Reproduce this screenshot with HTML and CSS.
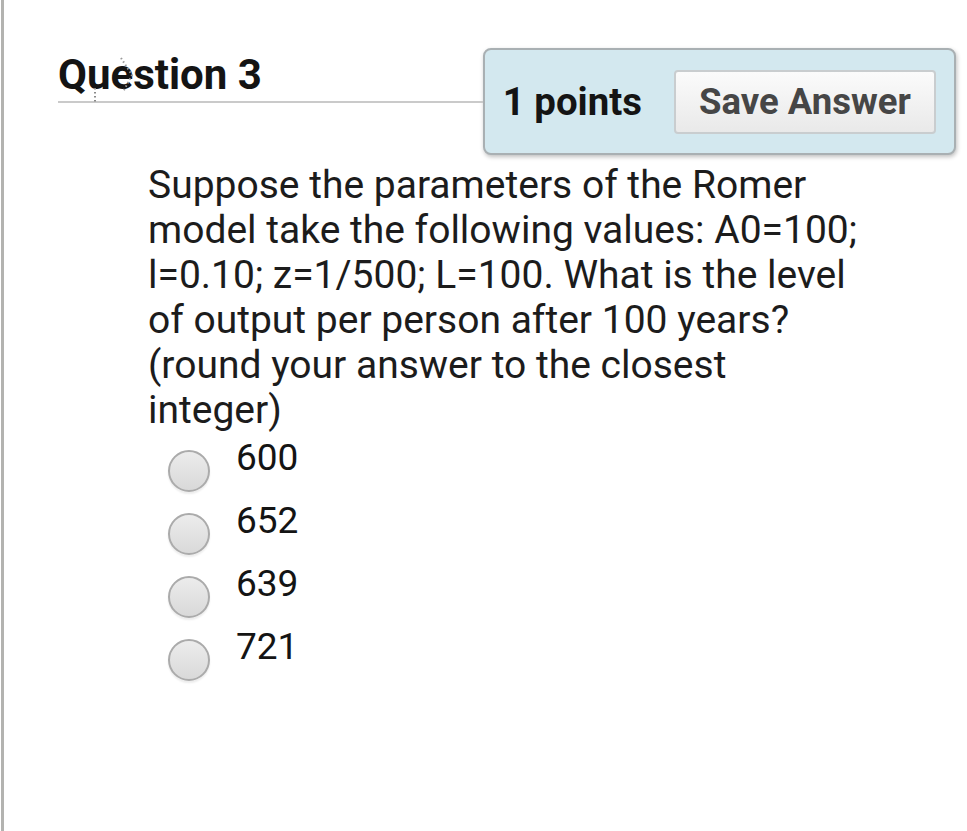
FILE: index.html
```html
<!DOCTYPE html>
<html>
<head>
<meta charset="utf-8">
<link rel="stylesheet" href="styles.css">
</head>
<body>
<div class="page">
  <div class="header">
    <div class="heading">
      <h1 class="title">Question 3</h1>
      <svg class="cursor-mark" width="50" height="50" viewBox="0 0 50 50">
        <polyline points="27,2 38,19 29,36" fill="none" stroke="#9a9a9a" stroke-width="2" stroke-dasharray="1.5 2.5"/>
        <line x1="1" y1="32" x2="1" y2="48" stroke="#8a8a8a" stroke-width="2" stroke-dasharray="1.5 2.5"/>
      </svg>
    </div>
    <div class="points-box">
      <span class="points">1 points</span>
      <button class="save-btn">Save Answer</button>
    </div>
  </div>
  <div class="question">
    <p class="prompt">Suppose the parameters of the Romer<br>model take the following values: A0=100;<br>l=0.10; z=1/500; L=100. What is the level<br>of output per person after 100 years?<br>(round your answer to the closest<br>integer)</p>
    <ul class="options">
      <li class="option"><span class="radio"></span><span class="label">600</span></li>
      <li class="option"><span class="radio"></span><span class="label">652</span></li>
      <li class="option"><span class="radio"></span><span class="label">639</span></li>
      <li class="option"><span class="radio"></span><span class="label">721</span></li>
    </ul>
  </div>
</div>
</body>
</html>
```
FILE: styles.css
```css
html, body {
  margin: 0;
  padding: 0;
  background: #ffffff;
}
body {
  font-family: Roboto, "Liberation Sans", Arial, sans-serif;
  color: #1a1a1a;
}
.page {
  margin-left: 1px;
  border-left: 3px solid #b3b3b0;
  min-height: 831px;
  box-sizing: border-box;
  padding-left: 54px;
  padding-right: 11px;
}
.header {
  display: flex;
  align-items: flex-start;
}
.heading {
  position: relative;
  flex: 1;
  margin-top: 50px;
  padding-bottom: 1px;
  border-bottom: 2px solid #cacaca;
}
.title {
  margin: 0;
  font-size: 42px;
  line-height: 50px;
  font-weight: 700;
  color: #141414;
}
.cursor-mark {
  position: absolute;
  left: 36px;
  top: 6px;
}
.points-box {
  margin-top: 48px;
  display: flex;
  align-items: center;
  gap: 32px;
  padding: 20px 18px 19px 18px;
  background: #d3e8ef;
  border: 2px solid #a9b0b3;
  border-radius: 8px;
  box-shadow: 1px 2px 4px rgba(0, 0, 0, 0.25);
}
.points {
  font-size: 38.4px;
  font-weight: 700;
  color: #141414;
  line-height: 44px;
}
.save-btn {
  font-family: Roboto, "Liberation Sans", Arial, sans-serif;
  font-size: 36.5px;
  font-weight: 700;
  color: #464646;
  height: 64px;
  width: 262px;
  padding: 0 0 2px 0;
  background: linear-gradient(#fbfbfb, #e9e9e9);
  border: 2px solid #c9cdcf;
  border-radius: 4px;
}
.question {
  padding-left: 90px;
}
.prompt {
  margin: 8px 0 0 0;
  font-size: 39px;
  line-height: 45px;
  color: #1c1c1c;
}
.options {
  list-style: none;
  margin: 1px 0 0 20px;
  padding: 0;
}
.option {
  display: flex;
  align-items: flex-start;
  height: 63px;
}
.radio {
  width: 38px;
  height: 38px;
  margin-top: 16px;
  border: 2px solid #ababab;
  border-radius: 50%;
  background: linear-gradient(#ececec, #d9d9d9);
  box-shadow: 0 2px 2px rgba(0, 0, 0, 0.08);
}
.label {
  margin-left: 26px;
  padding-top: 1px;
  font-size: 37px;
  line-height: 45px;
  color: #141414;
}
```
